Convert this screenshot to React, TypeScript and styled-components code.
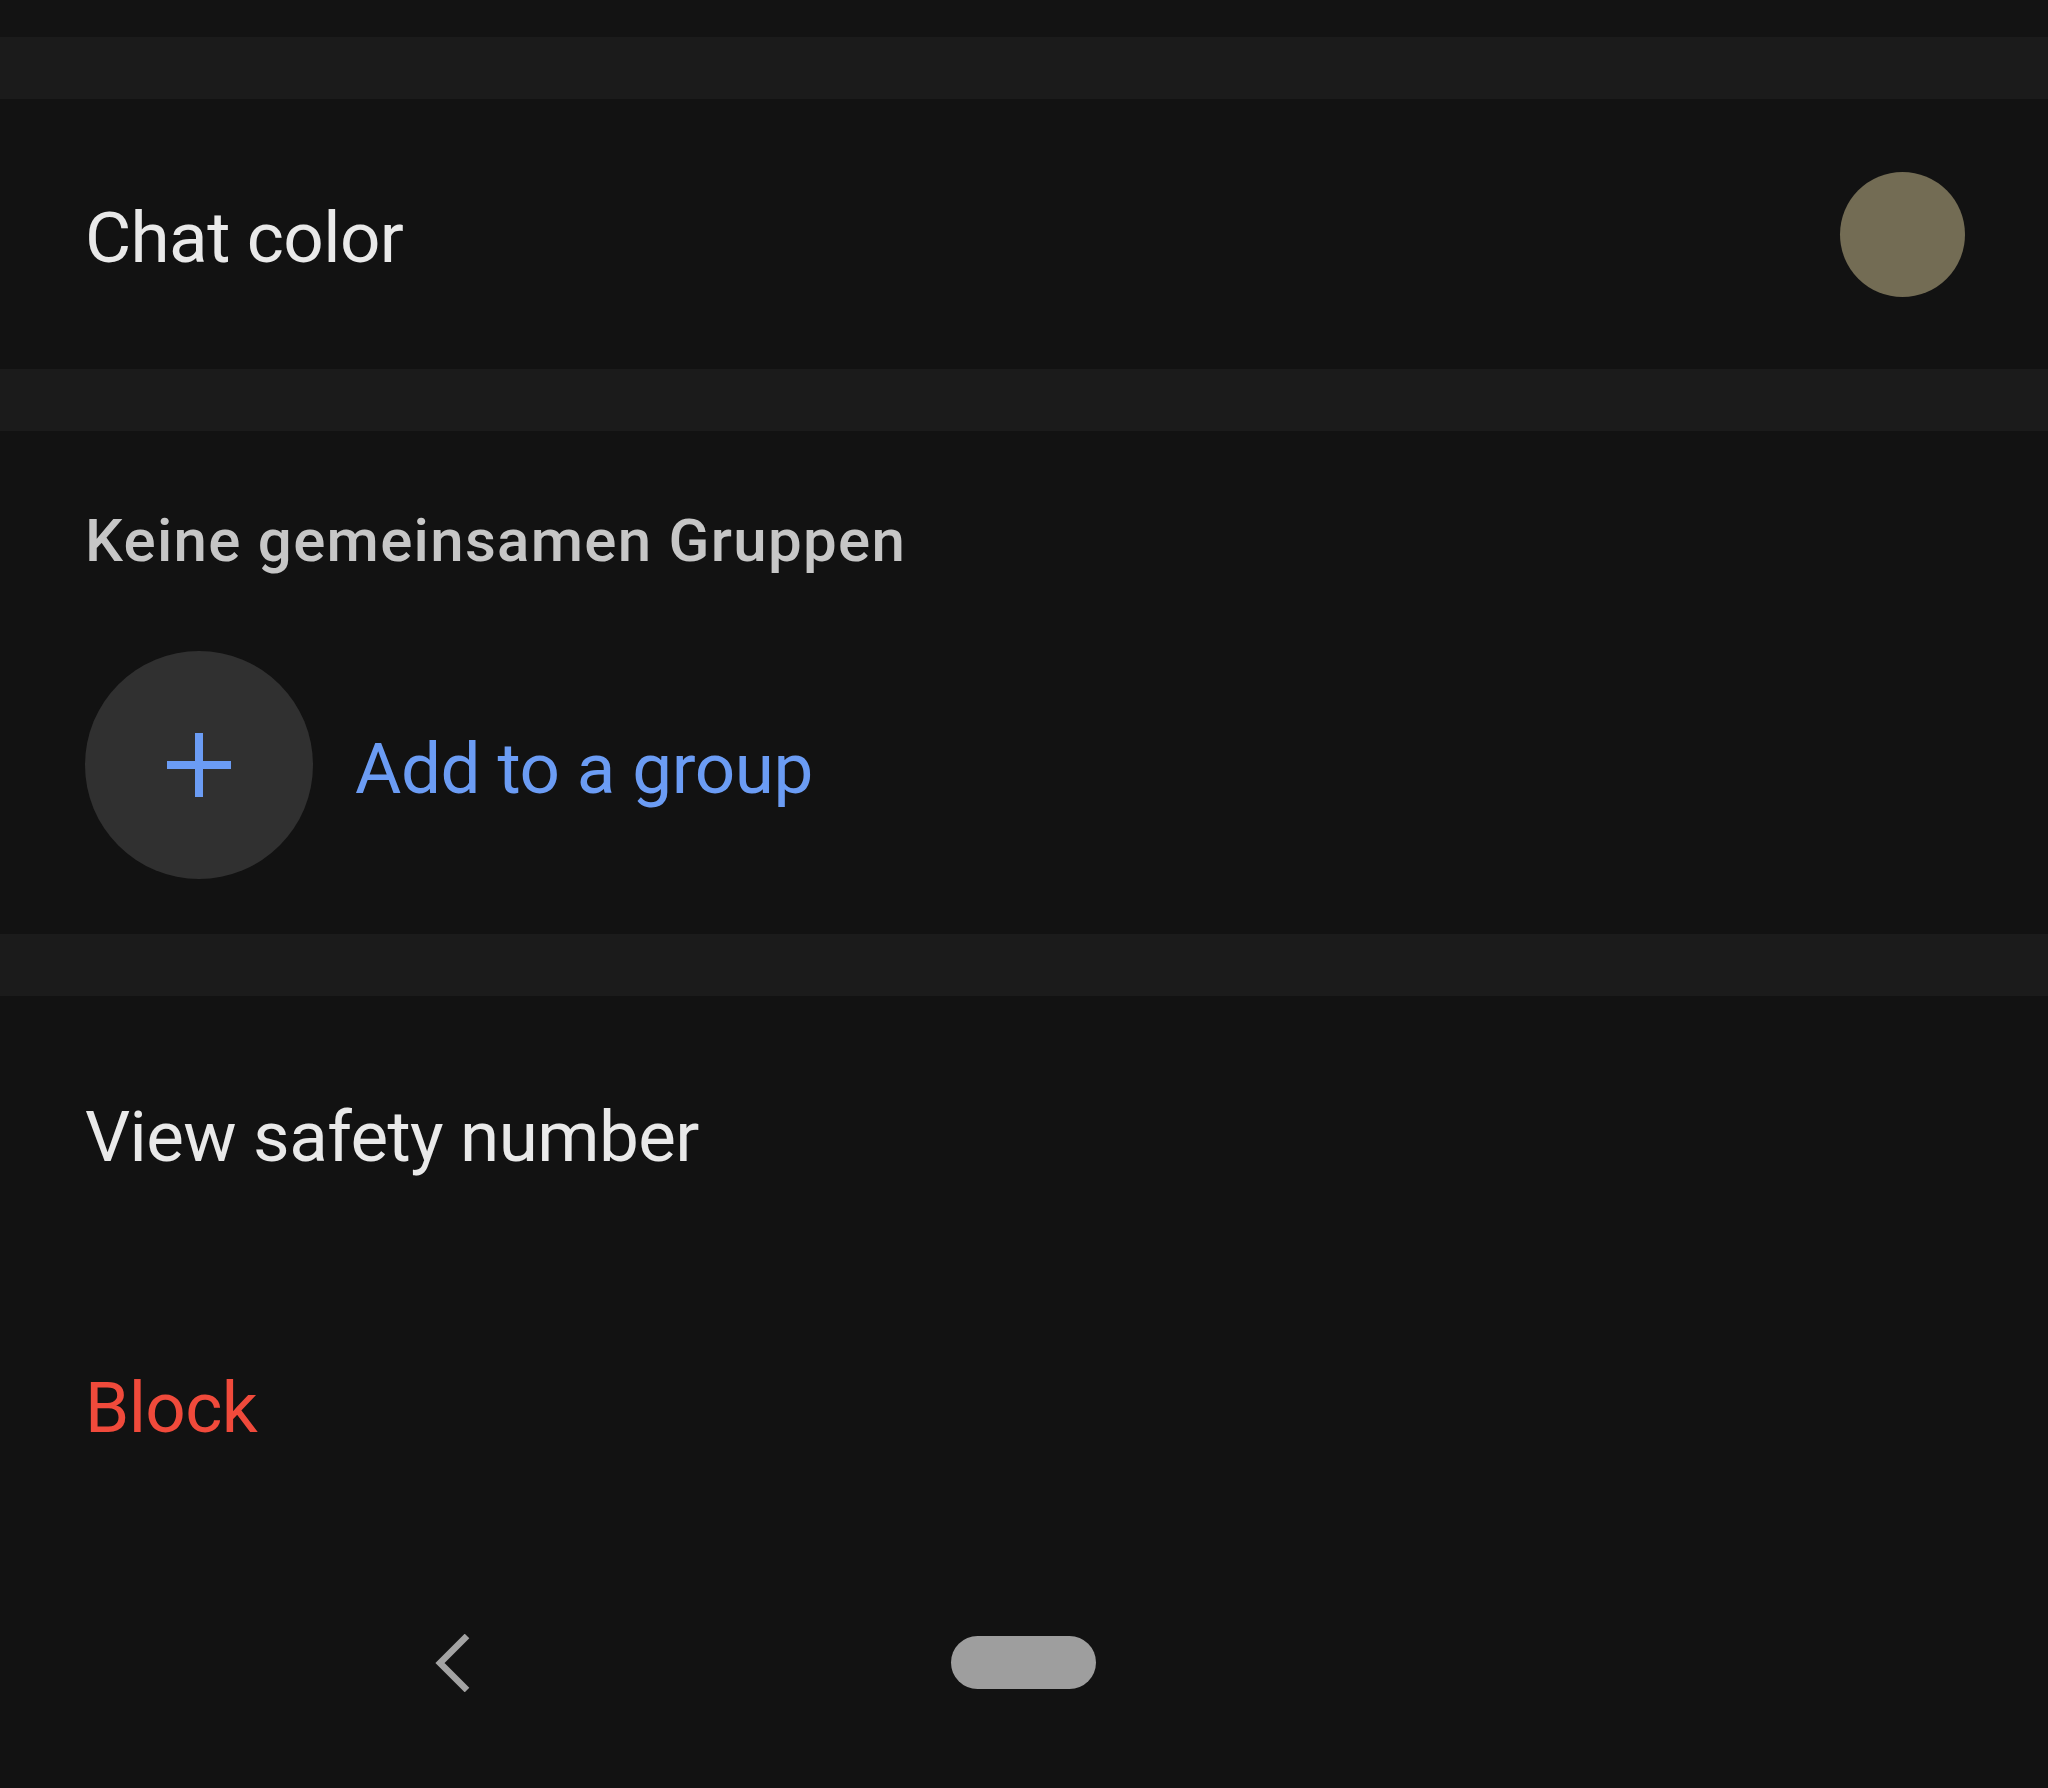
import styled, { createGlobalStyle } from "styled-components";

const GlobalStyle = createGlobalStyle`
  html, body {
    margin: 0;
    padding: 0;
    background: #121212;
  }
  body {
    font-family: Roboto, "Noto Sans", "Liberation Sans", sans-serif;
  }
`;

const Screen = styled.div`
  width: 2048px;
  height: 1788px;
  display: flex;
  flex-direction: column;
  background: #121212;
  overflow: hidden;
`;

const TopEdge = styled.div`
  height: 37px;
  background: #131313;
`;

const Divider = styled.div`
  height: 62px;
  background: #1b1b1b;
`;

const Row = styled.div<{ $height: number }>`
  height: ${(p) => p.$height}px;
  display: flex;
  align-items: center;
  justify-content: space-between;
  padding: 0 83px 0 85px;
  box-sizing: border-box;
`;

const Label = styled.span<{ $tone?: "default" | "danger"; $shift?: number }>`
  font-size: 71px;
  line-height: 84px;
  font-weight: 400;
  letter-spacing: -0.6px;
  color: ${(p) => (p.$tone === "danger" ? "#f04a3b" : "#e9e9e9")};
  padding-top: ${(p) => (p.$shift ?? 0) * 2}px;
`;

const Swatch = styled.div<{ $color: string }>`
  width: 125px;
  height: 125px;
  border-radius: 50%;
  background: ${(p) => p.$color};
`;

const GroupSection = styled.section`
  display: flex;
  flex-direction: column;
  gap: 70px;
  padding: 70px 85px 55px;
`;

const SectionTitle = styled.h3`
  margin: 0;
  font-size: 60px;
  line-height: 80px;
  font-weight: 500;
  letter-spacing: 1.3px;
  color: #c6c6c6;
`;

const AddRow = styled.div`
  display: flex;
  align-items: center;
  gap: 42px;
`;

const AddCircle = styled.div`
  width: 228px;
  height: 228px;
  border-radius: 50%;
  background: #303030;
  display: flex;
  align-items: center;
  justify-content: center;
`;

const AddLabel = styled.span`
  font-size: 71px;
  line-height: 84px;
  letter-spacing: -0.4px;
  padding-top: 8px;
  color: #6b9cf4;
`;

const NavBar = styled.nav`
  flex: 1;
  display: grid;
  grid-template-columns: repeat(3, 1fr);
  align-items: center;
  justify-items: center;
  padding: 0 168px;
`;

const BackButton = styled.div`
  display: flex;
  align-items: center;
  justify-content: center;
`;

const HomePill = styled.div`
  width: 145px;
  height: 53px;
  border-radius: 27px;
  background: #9e9e9e;
`;

const PlusIcon = () => (
  <svg width="64" height="64" viewBox="0 0 64 64">
    <path d="M32 0V64M0 32H64" stroke="#6b9cf4" strokeWidth="8" fill="none" />
  </svg>
);

const BackIcon = () => (
  <svg width="36" height="58" viewBox="0 0 36 58">
    <path
      d="M32 2L5 29L32 56"
      stroke="#a3a3a3"
      strokeWidth="6.5"
      fill="none"
      strokeLinejoin="miter"
    />
  </svg>
);

export default function App() {
  return (
    <Screen>
      <GlobalStyle />
      <TopEdge />
      <Divider />
      <Row $height={270}>
        <Label $shift={4}>Chat color</Label>
        <Swatch $color="#736c54" />
      </Row>
      <Divider />
      <GroupSection>
        <SectionTitle>Keine gemeinsamen Gruppen</SectionTitle>
        <AddRow>
          <AddCircle>
            <PlusIcon />
          </AddCircle>
          <AddLabel>Add to a group</AddLabel>
        </AddRow>
      </GroupSection>
      <Divider />
      <Row $height={282}>
        <Label>View safety number</Label>
      </Row>
      <Row $height={259}>
        <Label $tone="danger">Block</Label>
      </Row>
      <NavBar>
        <BackButton>
          <BackIcon />
        </BackButton>
        <HomePill />
        <div />
      </NavBar>
    </Screen>
  );
}
